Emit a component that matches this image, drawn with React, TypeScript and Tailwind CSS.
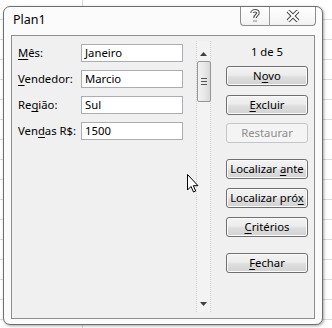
import type { ReactNode } from 'react';
import clsx from 'clsx';

const FONT = 'font-["Noto_Sans","Liberation_Sans",sans-serif]';

function Field({ label, value }: { label: ReactNode; value: string }) {
  return (
    <div className="flex h-[18px] items-center">
      <div className="w-[63px] text-[11.3px] leading-none text-black">
        <span>{label}</span>
      </div>
      <div className="flex h-[18px] w-[102px] items-center border border-[#abadb3] bg-white pl-[3px] text-[11.3px] leading-none text-black">
        {value}
      </div>
    </div>
  );
}

function DlgButton({ children, disabled, className }: { children: ReactNode; disabled?: boolean; className?: string }) {
  return (
    <div
      className={clsx(
        'flex h-5 w-[82px] items-center justify-center rounded-[3px] border text-[11.3px] leading-none',
        disabled
          ? 'border-[#c4c7c9] bg-[#f4f4f4] text-[#8d8d8d]'
          : 'border-[#707070] bg-[linear-gradient(#f3f3f3,#ececec_45%,#dedede_55%,#d2d2d2)] text-black shadow-[inset_0_0_0_1px_#fbfbfb]',
        className,
      )}
    >
      <span className="whitespace-pre">{children}</span>
    </div>
  );
}

function Scrollbar() {
  return (
    <div className="mt-[5px] flex h-[271px] w-[15px] flex-col items-center border-x border-dotted border-x-[#cfcfcf] bg-[#f3f3f3]">
      <svg width="7" height="4" className="mt-[11px]" viewBox="0 0 7 4">
        <path d="M0 4 L3.5 0 L7 4 Z" fill="#404040" />
      </svg>
      <div className="mt-[5px] flex h-[41px] w-[14px] flex-col items-center justify-center gap-[2px] rounded-[2px] border border-[#979797] bg-[linear-gradient(90deg,#f2f2f2,#e9e9e9_50%,#d9d9d9)]">
        <div className="h-px w-[6px] bg-[#555]" />
        <div className="h-px w-[6px] bg-[#555]" />
        <div className="h-px w-[6px] bg-[#555]" />
      </div>
      <div className="grow" />
      <svg width="7" height="4" className="mb-[6px]" viewBox="0 0 7 4">
        <path d="M0 0 L3.5 4 L7 0 Z" fill="#404040" />
      </svg>
    </div>
  );
}

function CaptionButtons() {
  return (
    <div className="flex h-[19px] overflow-hidden rounded-b-[4px] border border-t-0 border-[#8d8d8d] bg-[linear-gradient(#ffffff,#f2f2f2)]">
      <div className="flex w-[29px] items-center justify-center border-r border-[#9a9a9a]">
        <svg width="10" height="14" viewBox="0 0 10 14">
          <path d="M2 4 C2 1 8 1 8 4 C8 6 5 6 5 9 M5 11.5 L5 12.5" fill="none" stroke="#4a4a4a" strokeWidth="3.4" />
          <path d="M2 4 C2 1 8 1 8 4 C8 6 5 6 5 9 M5 11.5 L5 12.5" fill="none" stroke="#ffffff" strokeWidth="1.4" />
        </svg>
      </div>
      <div className="flex w-[45px] items-center justify-center">
        <svg width="14" height="12" viewBox="0 0 14 12">
          <path d="M2 1 L12 11 M12 1 L2 11" fill="none" stroke="#4a4a4a" strokeWidth="4" />
          <path d="M2 1 L12 11 M12 1 L2 11" fill="none" stroke="#ffffff" strokeWidth="2" />
        </svg>
      </div>
    </div>
  );
}

function Cursor() {
  return (
    <svg width="12" height="19" viewBox="0 0 12 19" className="absolute left-[187px] top-[174px]">
      <path
        d="M0.5 0.5 L0.5 16 L4 12.5 L6.5 18 L8.7 17 L6.3 11.7 L11 11.7 Z"
        fill="#ffffff"
        stroke="#000000"
        strokeWidth="1"
        strokeLinejoin="round"
      />
    </svg>
  );
}

export default function App() {
  return (
    <div
      className={clsx(
        'relative h-[328px] w-[332px] overflow-hidden bg-white pl-[3px] pt-[6px]',
        'bg-[linear-gradient(90deg,transparent_82px,#dadada_82px,#dadada_83px,transparent_83px),linear-gradient(transparent_19px,#dadada_19px)] bg-[length:332px_328px,332px_20px]',
        FONT,
      )}
    >
      <div className="flex h-[319px] w-[320px] flex-col rounded-[7px] border border-[#6f6f6f] bg-[#fbfbfb] shadow-[1px_1px_3px_rgba(0,0,0,0.35)]">
        <div className="flex h-[28px] items-start justify-between pl-[9px] pr-[6px]">
          <div className="mt-[7px] text-[12.5px] leading-none text-black">Plan1</div>
          <CaptionButtons />
        </div>
        <div className="mx-[7px] flex h-[284px] border border-[#8e8e8e] bg-[#f0f0f0]">
          <div className="flex flex-col gap-[8px] pl-[6px] pt-[8px]">
            <Field label={<><u className="underline-offset-2">M</u>ês:</>} value="Janeiro" />
            <Field label={<><u className="underline-offset-2">V</u>endedor:</>} value="Marcio" />
            <Field label={<>Re<u className="underline-offset-2">g</u>ião:</>} value="Sul" />
            <Field label={<>Ven<u className="underline-offset-2">d</u>as R$:</>} value="1500" />
          </div>
          <div className="ml-[13px]">
            <Scrollbar />
          </div>
          <div className="ml-[15px] flex flex-col">
            <div className="mt-[8px] h-[16px] text-center text-[11.3px] leading-[16px] text-black">1 de 5</div>
            <DlgButton className="mt-[6px]">
              N<u className="underline-offset-2">o</u>vo
            </DlgButton>
            <DlgButton className="mt-[9px]">
              <u className="underline-offset-2">E</u>xcluir
            </DlgButton>
            <DlgButton className="mt-[8px]" disabled>
              Restaurar
            </DlgButton>
            <DlgButton className="mt-[16px]">
              Localizar <u className="underline-offset-2">a</u>nte
            </DlgButton>
            <DlgButton className="mt-[9px]">
              Localizar pró<u className="underline-offset-2">x</u>
            </DlgButton>
            <DlgButton className="mt-[9px]">
              <u className="underline-offset-2">C</u>ritérios
            </DlgButton>
            <DlgButton className="mt-[16px]">
              <u className="underline-offset-2">F</u>echar
            </DlgButton>
          </div>
        </div>
      </div>
      <Cursor />
    </div>
  );
}
